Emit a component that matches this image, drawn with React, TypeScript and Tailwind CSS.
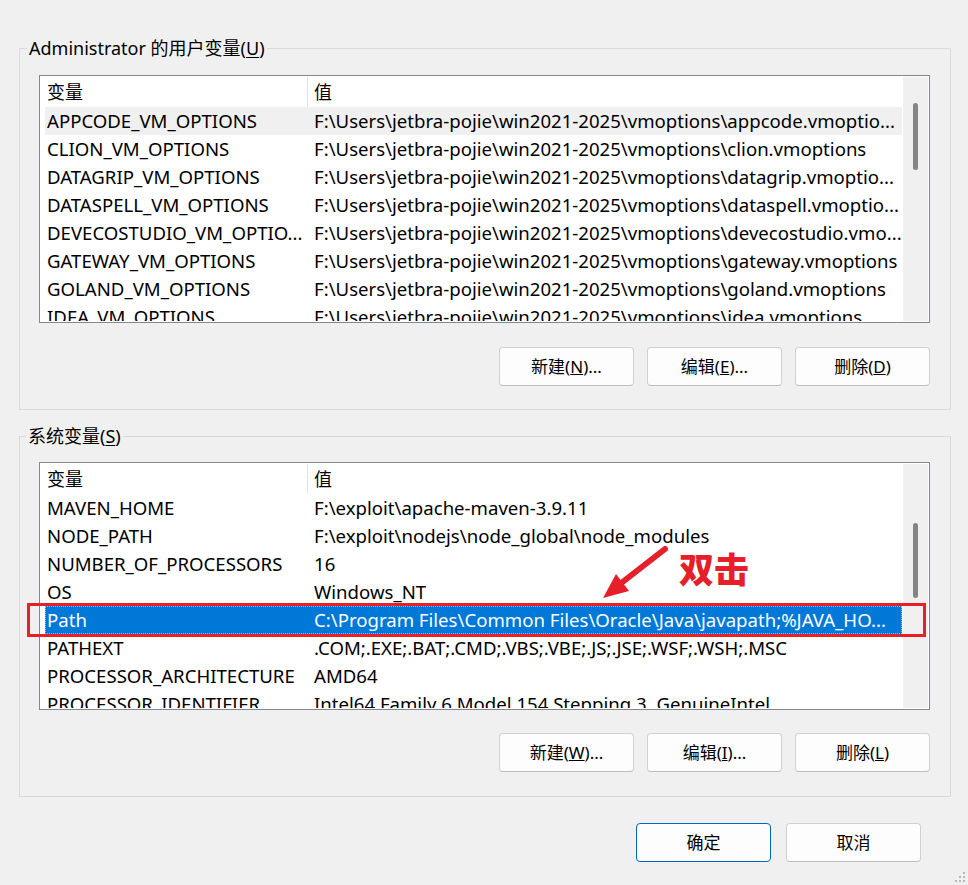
import type { ReactNode } from 'react'

const userVars: [string, string][] = [
  ['APPCODE_VM_OPTIONS', 'F:\\Users\\jetbra-pojie\\win2021-2025\\vmoptions\\appcode.vmoptio...'],
  ['CLION_VM_OPTIONS', 'F:\\Users\\jetbra-pojie\\win2021-2025\\vmoptions\\clion.vmoptions'],
  ['DATAGRIP_VM_OPTIONS', 'F:\\Users\\jetbra-pojie\\win2021-2025\\vmoptions\\datagrip.vmoptio...'],
  ['DATASPELL_VM_OPTIONS', 'F:\\Users\\jetbra-pojie\\win2021-2025\\vmoptions\\dataspell.vmoptio...'],
  ['DEVECOSTUDIO_VM_OPTIO...', 'F:\\Users\\jetbra-pojie\\win2021-2025\\vmoptions\\devecostudio.vmo...'],
  ['GATEWAY_VM_OPTIONS', 'F:\\Users\\jetbra-pojie\\win2021-2025\\vmoptions\\gateway.vmoptions'],
  ['GOLAND_VM_OPTIONS', 'F:\\Users\\jetbra-pojie\\win2021-2025\\vmoptions\\goland.vmoptions'],
  ['IDEA_VM_OPTIONS', 'F:\\Users\\jetbra-pojie\\win2021-2025\\vmoptions\\idea.vmoptions'],
]

const sysVars: [string, string][] = [
  ['MAVEN_HOME', 'F:\\exploit\\apache-maven-3.9.11'],
  ['NODE_PATH', 'F:\\exploit\\nodejs\\node_global\\node_modules'],
  ['NUMBER_OF_PROCESSORS', '16'],
  ['OS', 'Windows_NT'],
  ['Path', 'C:\\Program Files\\Common Files\\Oracle\\Java\\javapath;%JAVA_HO...'],
  ['PATHEXT', '.COM;.EXE;.BAT;.CMD;.VBS;.VBE;.JS;.JSE;.WSF;.WSH;.MSC'],
  ['PROCESSOR_ARCHITECTURE', 'AMD64'],
  ['PROCESSOR_IDENTIFIER', 'Intel64 Family 6 Model 154 Stepping 3, GenuineIntel'],
]

// Win32 style list view with a fixed header and a fake scrollbar
function VarList({
  rows,
  hovered,
  selected,
  thumbTop,
  thumbH,
}: {
  rows: [string, string][]
  hovered?: number
  selected?: number
  thumbTop: number
  thumbH: number
}) {
  return (
    <div className="h-[248px] w-[891px] border border-[#828790] bg-white p-px text-[18.6px]">
      <div className="flex h-full">
        <div className="min-w-0 flex-1 overflow-hidden pl-[4px]">
          <div className="flex h-[30px] items-center text-[18px]">
            <div className="w-[262px] pl-[2px]">变量</div>
            <div className="h-full w-px bg-[#e5e5e5]" />
            <div className="pl-[6px]">值</div>
          </div>
          {rows.map(([k, v], i) => (
            <div
              key={k}
              className={
                i === selected
                  ? 'flex h-[28px] items-center bg-[#0078d7] text-white outline-1 -outline-offset-1 outline-dotted outline-[#f2a65a]'
                  : i === hovered
                    ? 'flex h-[28px] items-center bg-[#f0f0f0]'
                    : 'flex h-[28px] items-center'
              }
            >
              <div className="w-[263px] shrink-0 overflow-hidden whitespace-nowrap pl-[2px]">{k}</div>
              <div className="min-w-0 flex-1 overflow-hidden whitespace-nowrap pl-[6px]">{v}</div>
            </div>
          ))}
        </div>
        <div className="ml-px w-[25px] shrink-0 bg-[#f0f0f0] pl-[10px]">
          <div style={{ marginTop: thumbTop, height: thumbH }} className="w-[5px] rounded-full bg-[#858585]" />
        </div>
      </div>
    </div>
  )
}

function Btn({ children, primary }: { children: ReactNode; primary?: boolean }) {
  return (
    <button
      type="button"
      className={
        primary
          ? 'h-[39px] w-[135px] rounded-[4px] border border-[#0067c0] bg-[#fdfdfd] text-[17px]'
          : 'h-[39px] w-[135px] rounded-[4px] border border-[#d0d0d0] border-b-[#bcbcbc] bg-[#fdfdfd] text-[17px]'
      }
    >
      {children}
    </button>
  )
}

function Group({
  title,
  children,
  legendShift,
}: {
  title: ReactNode
  children: ReactNode
  legendShift: string
}) {
  return (
    <fieldset className="ml-[19px] w-[930px] border border-[#dadada] pl-[19px] pr-[20px]">
      <legend className={`${legendShift} h-[24px] px-[2px] leading-[24px]`}>{title}</legend>
      {children}
    </fieldset>
  )
}

export default function App() {
  return (
    <div
      className="relative h-[885px] w-[968px] overflow-hidden bg-[#f0f0f0] pt-[36px] text-[18px] text-black"
      style={{ fontFamily: '"Noto Sans", "Noto Sans CJK SC", sans-serif' }}
    >
      <Group
        legendShift="ml-[-12px]"
        title={
          <>
            Administrator 的用户变量(<u className="underline-offset-2">U</u>)
          </>
        }
      >
        <div className="pt-[15px]">
          <VarList rows={userVars} hovered={0} thumbTop={26} thumbH={67} />
        </div>
        <div className="mt-[24px] flex justify-end gap-[13px] pb-[23px]">
          <Btn>
            新建(<u>N</u>)...
          </Btn>
          <Btn>
            编辑(<u>E</u>)...
          </Btn>
          <Btn>
            删除(<u>D</u>)
          </Btn>
        </div>
      </Group>

      <div className="mt-[14px]">
        <Group
          legendShift="ml-[-13px]"
          title={
            <>
              系统变量(<u className="underline-offset-2">S</u>)
            </>
          }
        >
          <div className="pt-[14px]">
            <VarList rows={sysVars} selected={4} thumbTop={59} thumbH={75} />
          </div>
          <div className="mt-[23px] flex justify-end gap-[13px] pb-[24px]">
            <Btn>
              新建(<u>W</u>)...
            </Btn>
            <Btn>
              编辑(<u>I</u>)...
            </Btn>
            <Btn>
              删除(<u>L</u>)
            </Btn>
          </div>
        </Group>
      </div>

      <div className="mt-[26px] flex justify-end gap-[15px] pr-[47px]">
        <Btn primary>确定</Btn>
        <Btn>取消</Btn>
      </div>

      {/* annotation overlay: red frame, arrow and label */}
      <div className="pointer-events-none absolute left-[27px] top-[603px] h-[34px] w-[899px] border-[3px] border-[#e5202a]" />
      <svg className="pointer-events-none absolute left-0 top-0" width="968" height="885" viewBox="0 0 968 885">
        <line x1="665" y1="549" x2="620" y2="584" stroke="#e5202a" strokeWidth="6" strokeLinecap="round" />
        <polygon points="603,598 629,591 616,574" fill="#e5202a" />
      </svg>
      <div
        className="pointer-events-none absolute left-[679px] top-[550px] text-[35px] font-black leading-none text-[#e5202a]"
        style={{ fontFamily: '"Noto Sans CJK SC", sans-serif' }}
      >
        双击
      </div>

      {/* size grip */}
      <svg className="absolute bottom-[2px] right-[2px]" width="12" height="12" viewBox="0 0 12 12">
        <rect x="9" y="1" width="2" height="2" fill="#b8b8b8" />
        <rect x="9" y="5" width="2" height="2" fill="#b8b8b8" />
        <rect x="5" y="5" width="2" height="2" fill="#b8b8b8" />
        <rect x="9" y="9" width="2" height="2" fill="#b8b8b8" />
        <rect x="5" y="9" width="2" height="2" fill="#b8b8b8" />
        <rect x="1" y="9" width="2" height="2" fill="#b8b8b8" />
      </svg>
    </div>
  )
}
